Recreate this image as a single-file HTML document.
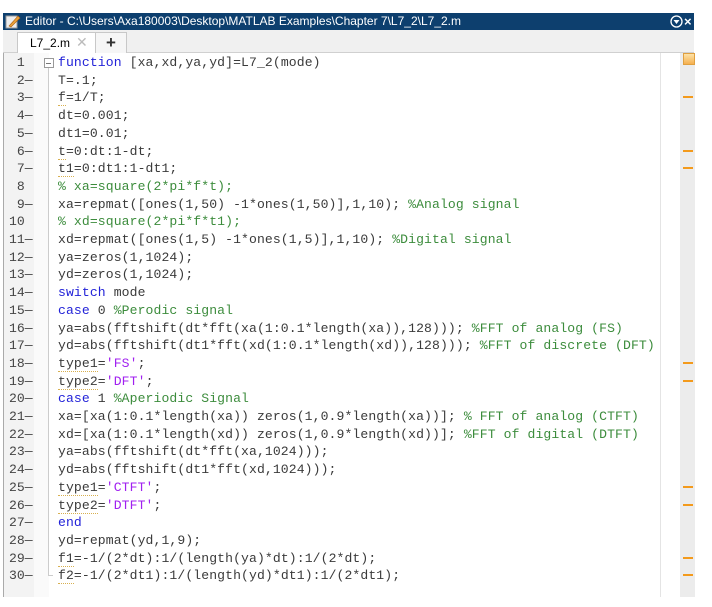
<!DOCTYPE html>
<html><head><style>
body{margin:0;width:712px;height:607px;background:#fff;position:relative;overflow:hidden;font-family:"Liberation Sans",sans-serif}
#title{position:absolute;left:3px;top:13px;width:691px;height:17px;background:#0d3f6e;color:#fff;font-size:12px;line-height:17px}
#title span{position:absolute;left:22px;top:0}
#tabs{position:absolute;left:3px;top:30px;width:691px;height:22px;background:#f0f0f0;border-bottom:1px solid #d0d0d0}
#tab{position:absolute;left:14px;top:2px;width:77px;height:20px;background:#fff;border:1px solid #c8c8c8;border-bottom:none;font-size:12px}
#plus{position:absolute;left:92px;top:2px;width:30px;height:20px;background:#f6f6f6;border:1px solid #c8c8c8;border-bottom:none;font-size:17px;font-weight:bold;text-align:center;line-height:19px;color:#333}
#ed{position:absolute;left:3px;top:53px;width:691px;height:544px;background:#fff;border-left:1px solid #aaa}
#gut{position:absolute;left:0;top:0;width:30px;height:544px;background:#f3f3f3}
#gut2{position:absolute;left:30px;top:0;width:15px;height:544px;background:#fafafa}
#vl{position:absolute;left:656px;top:0;width:1px;height:544px;background:#e4e4e4}
#sb{position:absolute;left:676px;top:0;width:15px;height:544px;background:#ececec}
.m{position:absolute;left:679px;width:10px;height:2px;background:#f39a1c}
.l{position:absolute;left:0;height:18px;line-height:18px;font-family:"Liberation Mono",monospace;font-size:13.1px;letter-spacing:.1px;color:#3a3a3a;white-space:pre}
.n{position:absolute;left:9px;font-family:"Liberation Mono",monospace;font-size:13.1px;color:#444;white-space:pre;line-height:18px}
.k{color:#2323d8}.c{color:#3c8c3c}.s{color:#a020f0}
.u{border-bottom:1px dotted #d8b050}
</style></head><body>
<div id="title"><svg style="position:absolute;left:2px;top:1px" width="16" height="15"><rect x="1" y="2" width="11" height="12" fill="#eee" stroke="#999"/><path d="M4 12 L13 2 L15 4 L6 13 Z" fill="#e9a23b" stroke="#b06010" stroke-width=".6"/></svg><span>Editor - C:\Users\Axa180003\Desktop\MATLAB Examples\Chapter 7\L7_2\L7_2.m</span>
<svg style="position:absolute;left:667px;top:2px" width="13" height="13"><circle cx="6.5" cy="6.5" r="5.5" fill="none" stroke="#fff" stroke-width="1.3"/><path d="M3.5 5 L9.5 5 L6.5 9 Z" fill="#fff"/></svg><span style="left:681px;font-weight:bold;font-size:13px">×</span></div>
<div id="tabs"><div id="tab"><span style="position:absolute;left:12px;top:3px">L7_2.m</span><span style="position:absolute;left:58px;top:1px;color:#bbb;font-size:14px">✕</span></div><div id="plus">+</div></div>
<div id="ed"><div id="gut"></div><div id="gut2"></div><div id="vl"></div><div id="sb"></div>
<div style="position:absolute;left:679px;top:0;width:10px;height:10px;background:linear-gradient(#fde3a8,#f5b050);border:1px solid #e0a040"></div>
<div style="position:absolute;left:40px;top:5px;width:8px;height:8px;border:1px solid #999;background:#fff"></div>
<div style="position:absolute;left:42px;top:10px;width:5px;height:1px;background:#777"></div>
<div style="position:absolute;left:44px;top:15px;width:1px;height:508px;background:#ccc"></div>
<div style="position:absolute;left:44px;top:522px;width:5px;height:1px;background:#ccc"></div>
</div>
<div id="code" style="position:absolute;left:0;top:53px;width:712px">
</div>
<script>
var L=[
'<span class="k">function</span> [xa,xd,ya,yd]=L7_2(mode)',
'T=.1;',
'<span class="u">f</span>=1/T;',
'dt=0.001;',
'dt1=0.01;',
'<span class="u">t</span>=0:dt:1-dt;',
'<span class="u">t1</span>=0:dt1:1-dt1;',
'<span class="c">% xa=square(2*pi*f*t);</span>',
'xa=repmat([ones(1,50) -1*ones(1,50)],1,10); <span class="c">%Analog signal</span>',
'<span class="c">% xd=square(2*pi*f*t1);</span>',
'xd=repmat([ones(1,5) -1*ones(1,5)],1,10); <span class="c">%Digital signal</span>',
'ya=zeros(1,1024);',
'yd=zeros(1,1024);',
'<span class="k">switch</span> mode',
'<span class="k">case</span> 0 <span class="c">%Perodic signal</span>',
'ya=abs(fftshift(dt*fft(xa(1:0.1*length(xa)),128))); <span class="c">%FFT of analog (FS)</span>',
'yd=abs(fftshift(dt1*fft(xd(1:0.1*length(xd)),128))); <span class="c">%FFT of discrete (DFT)</span>',
'<span class="u">type1</span>=<span class="s">\'FS\'</span>;',
'<span class="u">type2</span>=<span class="s">\'DFT\'</span>;',
'<span class="k">case</span> 1 <span class="c">%Aperiodic Signal</span>',
'xa=[xa(1:0.1*length(xa)) zeros(1,0.9*length(xa))]; <span class="c">% FFT of analog (CTFT)</span>',
'xd=[xa(1:0.1*length(xd)) zeros(1,0.9*length(xd))]; <span class="c">%FFT of digital (DTFT)</span>',
'ya=abs(fftshift(dt*fft(xa,1024)));',
'yd=abs(fftshift(dt1*fft(xd,1024)));',
'<span class="u">type1</span>=<span class="s">\'CTFT\'</span>;',
'<span class="u">type2</span>=<span class="s">\'DTFT\'</span>;',
'<span class="k">end</span>',
'yd=repmat(yd,1,9);',
'<span class="u">f1</span>=-1/(2*dt):1/(length(ya)*dt):1/(2*dt);',
'<span class="u">f2</span>=-1/(2*dt1):1/(length(yd)*dt1):1/(2*dt1);'];
var h='',marks=[3,6,7,18,19,25,26,29,30];
for(var i=0;i<L.length;i++){var y=i*17.7+1;var n=i+1;
h+='<div class="n" style="top:'+y+'px">'+(n<10?' ':'')+n+(n==1||n==8||n==10?'':'\u2014')+'</div>';
h+='<div class="l" style="left:58px;top:'+y+'px">'+L[i]+'</div>';
if(marks.indexOf(n)>=0)h+='<div class="m" style="left:683px;top:'+(y+7)+'px"></div>';}
document.getElementById('code').innerHTML=h;
</script>
</body></html>
